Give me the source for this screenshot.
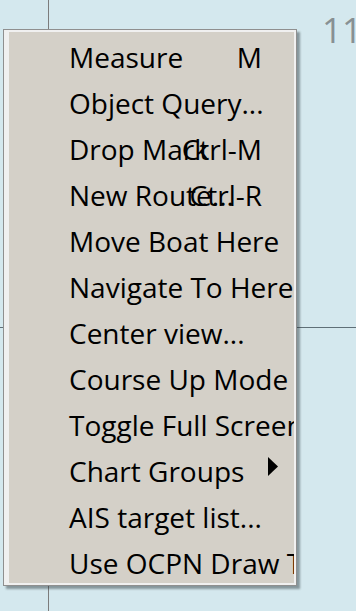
const items: { label: string; shortcut?: string; submenu?: boolean }[] = [
  { label: "Measure", shortcut: "M" },
  { label: "Object Query..." },
  { label: "Drop Mark", shortcut: "Ctrl-M" },
  { label: "New Route...", shortcut: "Ctrl-R" },
  { label: "Move Boat Here" },
  { label: "Navigate To Here" },
  { label: "Center view..." },
  { label: "Course Up Mode" },
  { label: "Toggle Full Screen" },
  { label: "Chart Groups", submenu: true },
  { label: "AIS target list..." },
  { label: "Use OCPN Draw Tools" },
]

function ContextMenu() {
  return (
    <div className="absolute left-[3px] top-[29px] w-[294px] h-[557px] border border-[#8f8f8f] bg-[#f0f0f0] pl-[5px] pr-[2px] py-[2px] shadow-[3px_3px_2px_rgba(40,50,55,0.45)]">
      <div className="h-[551px] pt-[2px] bg-[#d4d0c8] overflow-hidden">
        {items.map((item) => (
          <div key={item.label} className="relative h-[46px] pl-[60px] leading-[46px] text-[28px] text-black whitespace-nowrap overflow-hidden">
            {item.label}
            {item.shortcut && (
              <span className="absolute right-[32px] top-0">{item.shortcut}</span>
            )}
            {item.submenu && (
              <svg className="absolute left-[259px] top-[9px]" width="10" height="19" viewBox="0 0 10 19">
                <path d="M0 0 L10 9.5 L0 19 Z" fill="#000" />
              </svg>
            )}
          </div>
        ))}
      </div>
    </div>
  )
}

export default function App() {
  return (
    <div
      className="relative w-[356px] h-[611px] bg-[#d4e8ee] overflow-hidden"
      style={{ fontFamily: '"Open Sans", "Noto Sans", sans-serif' }}
    >
      {/* chart grid */}
      <div className="absolute left-[48px] top-0 w-px h-full bg-[#7c7c7c]" />
      <div className="absolute left-0 top-[327px] w-full h-px bg-[#5f6f77]" />
      <div className="absolute left-[322px] top-[12px] text-[35px] leading-none text-[#889093]">11</div>

      <ContextMenu />
    </div>
  )
}
